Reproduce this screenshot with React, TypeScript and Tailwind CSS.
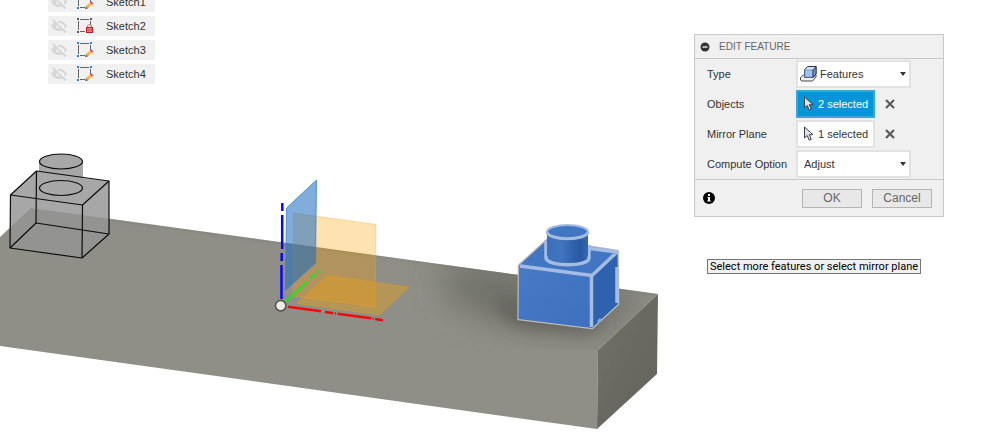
import { useState } from 'react'

const sketches = [
  { name: 'Sketch1', locked: false },
  { name: 'Sketch2', locked: true },
  { name: 'Sketch3', locked: false },
  { name: 'Sketch4', locked: false },
]

function HiddenIcon() {
  return (
    <svg width="16" height="14" viewBox="0 0 16 14" fill="none" stroke="#d6d6d6" aria-hidden="true">
      <path d="M1 7C3 4 5.500 3 8 3s5 1 7 4c-2 3-4.500 4-7 4S3 10 1 7Z" strokeWidth="1.800" />
      <path d="M5 5.500a3 3 0 0 0 4 4.500" strokeWidth="2.500" />
      <path d="M3 .500l13 12" stroke="#f1f1f1" strokeWidth="1.800" />
      <path d="M1.500 .500l13 13" strokeWidth="1.800" />
    </svg>
  )
}

function SketchIcon({ locked }: { locked: boolean }) {
  const corner = locked ? '#5a5a5a' : '#1b87d9'
  return (
    <svg width="17" height="17" viewBox="0 0 17 17" aria-hidden="true">
      <path d="M3 1.500h9M1.500 3v9M13.500 3v5M3 13.500h5" stroke="#666" fill="none" />
      <g fill={corner}>
        <rect width="2" height="2" />
        <rect x="13" width="2" height="2" />
        <rect y="13" width="2" height="2" />
      </g>
      {locked ? (
        <>
          <path d="M10.500 10V8.500a2 2 0 0 1 4 0V10" stroke="#d88" strokeWidth="1.200" fill="none" />
          <rect x="9.500" y="9.500" width="6" height="5" fill="#dc8080" stroke="#b82025" />
          <path d="M10 12h5" stroke="#c85050" />
        </>
      ) : (
        <>
          <path d="M9 12l4.500-4 2 2L11 14.500Z" fill="#fbb540" />
          <path d="M13 8.500l1.300-1.200 2 2L15 10.500Z" fill="#ee4050" />
          <path d="M9 12l2 2.500-3 .7Z" fill="#666" />
        </>
      )}
    </svg>
  )
}

function CursorIcon() {
  return (
    <svg width="12" height="16" viewBox="0 0 12 16" className="shrink-0" aria-hidden="true">
      <path d="M1.500 1v11l2.700-2.500 2 4.700 2.100-.9-2-4.600H10Z" fill="#dfe4ec" stroke="#3c3f4c" strokeLinejoin="round" />
    </svg>
  )
}

function FeatureIcon() {
  return (
    <svg width="17" height="16" viewBox="0 0 17 16" strokeLinejoin="round" aria-hidden="true">
      <path d="M.500 11.500L4 8.500h12V11l-3.500 4H2L.500 14Z" fill="#f0f1f4" stroke="#454650" />
      <path d="M4.500 4l3-3.500h8.500V8L13 11.500H4.500Z" fill="#d3e5f8" stroke="#26335a" />
      <path d="M5 4h8v7H5Z" fill="#9fc3ec" stroke="#7f9fca" />
      <path d="M13 4l3-3.500V8l-3 3.500Z" fill="#7f9fca" stroke="#26335a" />
    </svg>
  )
}

function ClearIcon() {
  return (
    <svg width="10" height="10" viewBox="0 0 10 10" aria-hidden="true">
      <path d="M1 1l8 8M9 1L1 9" stroke="#5c5c5c" strokeWidth="2.200" />
    </svg>
  )
}

function Caret() {
  return (
    <svg width="6" height="4" viewBox="0 0 6 4" className="pointer-events-none absolute right-[5px] top-3" aria-hidden="true">
      <path d="M0 0h6L3 4Z" fill="#333" />
    </svg>
  )
}

function Scene() {
  return (
    <svg viewBox="0 0 982 436" className="block w-full" role="img" aria-label="Model view">
      <defs>
        <linearGradient id="side" x1="0" y1="0" x2="1" y2="1">
          <stop offset="0" stopColor="#74736b" />
          <stop offset=".5" stopColor="#6a6960" />
          <stop offset="1" stopColor="#66655d" />
        </linearGradient>
        <linearGradient id="stud" x1="0" y1="0" x2="1" y2="0">
          <stop offset="0" stopColor="#3c70bb" />
          <stop offset=".35" stopColor="#4175c0" />
          <stop offset=".8" stopColor="#2859a2" />
          <stop offset="1" stopColor="#3468b4" />
        </linearGradient>
        <linearGradient id="cube" x1="0" y1="0" x2="1" y2="1">
          <stop offset="0" stopColor="#4679c6" />
          <stop offset="1" stopColor="#3e71bd" />
        </linearGradient>
        <filter id="softer" x="-40%" y="-80%" width="180%" height="260%">
          <feGaussianBlur stdDeviation="16" />
        </filter>
        <filter id="soft" x="-30%" y="-80%" width="160%" height="260%">
          <feGaussianBlur stdDeviation="9" />
        </filter>
        <filter id="edge" x="-10%" y="-20%" width="120%" height="140%">
          <feGaussianBlur stdDeviation="2" />
        </filter>
        <clipPath id="slab">
          <path d="M0 237L31 208L658 294L598 350L0 350Z" />
        </clipPath>
      </defs>

      {/* base slab */}
      <path d="M0 237L31 208L658 294L598 350L597 429L0 346Z" fill="#8f8f87" />
      <g clipPath="url(#slab)">
        <path d="M110 218L658 293" stroke="#74756d" strokeOpacity=".6" strokeWidth="3" filter="url(#edge)" />
        <path d="M440 262L530 266L650 292L600 332L500 322L450 304Z" fill="#65665e" fillOpacity=".7" filter="url(#softer)" />
        <path d="M490 300L520 304L606 318L590 332L515 326Z" fill="#4f5049" fillOpacity=".65" filter="url(#soft)" />
      </g>
      <path d="M598 350L658 294L657 374L597 429Z" fill="url(#side)" />

      {/* source feature */}
      <path
        d="M39 161.500a22 7.500 0 0 1 44 0V178L109 181V234L82 258L10 248V195L36.500 171L39 171.500Z"
        fill="#949494"
        fillOpacity=".82"
      />
      <g fill="none" stroke="#0c0c0c" strokeWidth="1.200" strokeLinejoin="round">
        <ellipse cx="61" cy="161.500" rx="21.500" ry="7.500" />
        <ellipse cx="61" cy="188" rx="21.500" ry="7.500" />
        <path d="M36.500 171L109 181L82.500 205L10.500 195Z" />
        <path d="M36 223L109 234L82 258L10 248Z" />
        <path d="M36.500 171L36 223M109 181V234M82.500 205L82 258M10.500 195L10 248" />
      </g>

      {/* origin planes and axes */}
      <path d="M293.500 213L376 224.500L375 307L293 296Z" fill="#ff9f00" fillOpacity=".3" stroke="#f5a623" strokeOpacity=".35" />
      <path d="M327 275.500L409 287L379.500 315L297 303.500Z" fill="#f0a010" fillOpacity=".4" stroke="#e09a20" strokeOpacity=".5" />
      <path d="M286.500 208L316.500 180L315.500 263L285.500 290Z" fill="#1c6cc0" fillOpacity=".56" stroke="#3a7fc8" strokeOpacity=".8" />
      <g fill="none" strokeWidth="2.500">
        <path d="M282.300 203v8M282.200 215v34M281.700 253v8M281.500 265v34" stroke="#0808f0" />
        <path d="M285 302L307 282M310.500 278.500L315.500 274M317.500 272.500L319 271" stroke="#10ee10" strokeWidth="2" />
        <path d="M288 306.700L321 311.300M325 312L333.500 313.200M335 313.300L336 313.500M337.500 313.700L371 318.300M372.500 318.500L373.500 318.700M375 319L383 320.200" stroke="#f50808" />
      </g>
      <circle cx="280.700" cy="305.700" r="5.200" fill="#ebebe7" stroke="#50504a" strokeWidth="1.500" />

      {/* mirrored feature, highlighted */}
      <g strokeLinejoin="round">
        <path d="M519 265.500L547 240L617.500 251L618 304L592 328L518.500 319Z" fill="#4276c3" stroke="#b9bbbd" strokeWidth="2.500" />
        <path d="M519 265.500L547 240L617.500 251L592 275Z" fill="#4276c3" />
        <path d="M519 265.500L592 275V328L518.500 319Z" fill="url(#cube)" />
        <path d="M592 275L617.500 252L618 304L592 328Z" fill="#2f62ae" />
        <path d="M520 266L592 275.500L617 252L590 248.500M617 267V303M591.500 276V327" fill="none" stroke="#a4bce2" strokeWidth="3.500" />
        <path d="M546 241V258c1 9 43 9 43 0V245" fill="url(#stud)" stroke="#a4bce2" strokeWidth="3.500" />
        <path d="M547 231V255c2 9 41 9 41 0V231" fill="url(#stud)" />
        <ellipse cx="567.500" cy="232" rx="20.500" ry="7" fill="#4276c3" stroke="#a4bce2" strokeWidth="2" />
        <path d="M547 232c2 9 39 9 41 0" fill="none" stroke="#a4bce2" strokeWidth="3" />
        <path d="M598 322l3-3" stroke="#86a7dc" strokeWidth="3" />
      </g>
    </svg>
  )
}

function Browser() {
  return (
    <ul className="absolute left-12 top-0 -mt-2 flex w-[107px] flex-col gap-1">
      {sketches.map((s) => (
        <li key={s.name} className="flex h-5 items-center bg-[#f1f1f1] pl-[3px] text-[11px] text-[#333]">
          <HiddenIcon />
          <span className="ml-[10px] mr-3">
            <SketchIcon locked={s.locked} />
          </span>
          {s.name}
        </li>
      ))}
    </ul>
  )
}

function SelectionRow({ id, label, count, active, onClear }: {
  id: string
  label: string
  count: number
  active?: boolean
  onClear: () => void
}) {
  return (
    <div className="flex h-[30px] items-center">
      <label htmlFor={id} className="w-[89px]">{label}</label>
      <button
        id={id}
        type="button"
        className={
          active
            ? 'flex h-7 w-[79px] items-center gap-[3px] border-2 border-[#3aa5dd] bg-[#0696d7] pl-[5px] text-white'
            : 'flex h-7 w-[79px] items-center gap-[3px] border-2 border-[#e2e2e2] bg-white pl-[5px]'
        }
      >
        <CursorIcon />
        <span className="whitespace-nowrap">{count} selected</span>
      </button>
      <button type="button" aria-label={`Clear ${label}`} className="ml-[10px]" onClick={onClear}>
        <ClearIcon />
      </button>
    </div>
  )
}

function EditFeature() {
  const [objects, setObjects] = useState(2)
  const [planes, setPlanes] = useState(1)

  return (
    <form className="w-[250px] border border-[#c8c8c8] bg-[#f0f0f0] text-[11px] text-[#333]">
      <div className="flex h-6 items-center gap-[9px] border-b border-[#c8c8c8] pl-[5px]">
        <svg width="10" height="10" viewBox="0 0 10 10" aria-hidden="true">
          <circle cx="5" cy="5" r="4.500" fill="#333" />
          <path d="M2.500 5h5" stroke="#fff" strokeWidth="1.300" />
        </svg>
        <h2 className="text-[10px] text-[#666]">EDIT FEATURE</h2>
      </div>

      <div className="flex flex-col pl-3">
        <div className="flex h-[30px] items-center">
          <label htmlFor="type" className="w-[89px]">Type</label>
          <div className="relative">
            <span className="pointer-events-none absolute left-1 top-1.5">
              <FeatureIcon />
            </span>
            <select id="type" className="h-7 w-[115px] appearance-none border-2 border-[#e2e2e2] bg-white pl-[22px]">
              <option>Features</option>
            </select>
            <Caret />
          </div>
        </div>
        <SelectionRow id="objects" label="Objects" count={objects} active onClear={() => setObjects(0)} />
        <SelectionRow id="plane" label="Mirror Plane" count={planes} onClear={() => setPlanes(0)} />
        <div className="flex h-[30px] items-center">
          <label htmlFor="compute" className="w-[89px]">Compute Option</label>
          <div className="relative">
            <select id="compute" className="h-7 w-[115px] appearance-none border-2 border-[#e2e2e2] bg-white pl-1.5">
              <option>Adjust</option>
            </select>
            <Caret />
          </div>
        </div>
      </div>

      <div className="flex h-[37px] items-center gap-[10px] border-t border-[#c8c8c8] pl-2 pr-[11px] text-xs text-[#666]">
        <svg width="12" height="12" viewBox="0 0 12 12" className="mr-auto" aria-hidden="true">
          <circle cx="6" cy="6" r="6" fill="#000" />
          <path d="M5 2h2v2H5ZM4.500 5H7v3.500h.700v1H4.300v-1H5V6h-.500Z" fill="#fff" />
        </svg>
        <button type="button" className="h-[19px] w-[60px] border border-[#b4b4b4] bg-[#e8e8e8] leading-4">OK</button>
        <button type="button" className="h-[19px] w-[60px] border border-[#b4b4b4] bg-[#e8e8e8] leading-4">Cancel</button>
      </div>
    </form>
  )
}

export default function App() {
  return (
    <main className="relative overflow-hidden bg-white font-['Liberation_Sans',Arial,sans-serif]">
      <Scene />
      <Browser />
      <div className="absolute right-[38px] top-[34px] flex flex-col gap-[42px]">
        <EditFeature />
        <p
          role="tooltip"
          className="ml-[13px] self-start whitespace-nowrap border border-[#767676] bg-[#f0f0f0] px-0.5 font-['Roboto',Tahoma,sans-serif] text-[11px] leading-[13px] text-black"
        >
          Select more features or select mirror plane
        </p>
      </div>
    </main>
  )
}
